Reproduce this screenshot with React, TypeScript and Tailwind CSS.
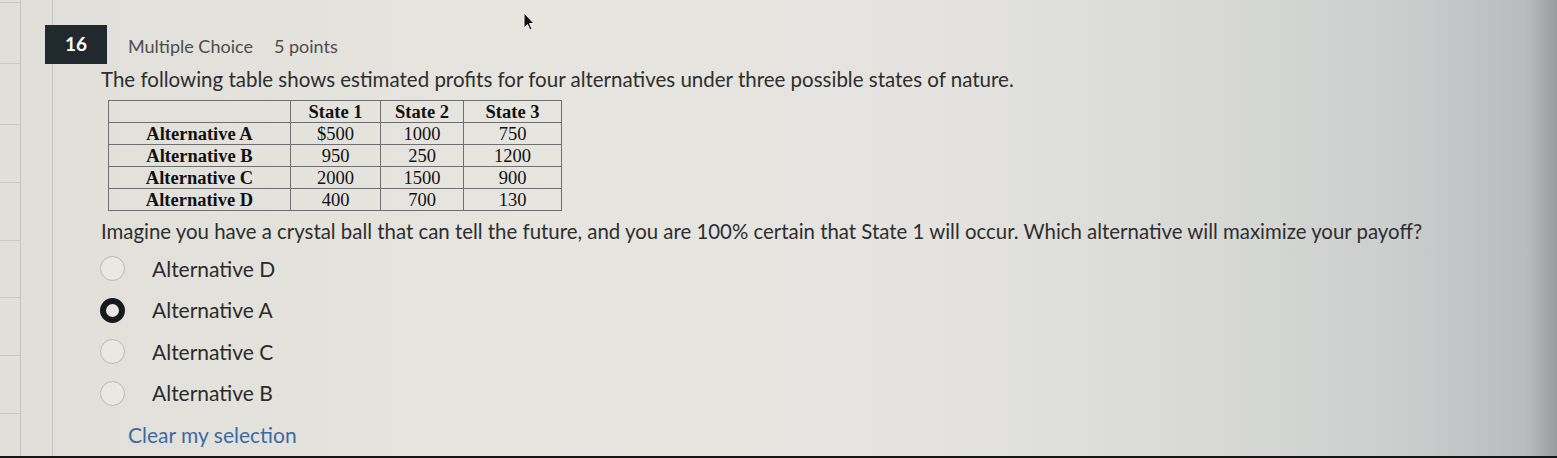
import React from "react";

const rows = [
  ["Alternative A", "$500", "1000", "750"],
  ["Alternative B", "950", "250", "1200"],
  ["Alternative C", "2000", "1500", "900"],
  ["Alternative D", "400", "700", "130"],
];

const options = [
  { label: "Alternative D", selected: false },
  { label: "Alternative A", selected: true },
  { label: "Alternative C", selected: false },
  { label: "Alternative B", selected: false },
];

export default function App() {
  return (
    <div
      className="relative w-[1557px] h-[458px] overflow-hidden flex flex-col bg-[linear-gradient(to_right,#e0dfda_0%,#e7e5e0_35%,#e4e3df_60%,#d8d9d7_78%,#cbcecd_90%,#b9bcbd_98%,#9a9d9e_100%)]"
      style={{ fontFamily: "Lato, 'Open Sans', sans-serif" }}
    >
      <div className="flex flex-1 min-h-0">
        {/* sidebar */}
        <div className="w-[53px] shrink-0 flex border-r border-[#c3c3c0]">
          <div className="w-[21px] border-r border-[#c3c3c0] flex flex-col">
            <div className="h-[3px] border-b border-[#c9c9c6]" />
            <div className="h-[61px] border-b border-[#c9c9c6]" />
            <div className="h-[61px] border-b border-[#c9c9c6]" />
            <div className="h-[58px] border-b border-[#c9c9c6]" />
            <div className="h-[58px] border-b border-[#c9c9c6]" />
            <div className="h-[57px] border-b border-[#c9c9c6]" />
            <div className="h-[58px] border-b border-[#c9c9c6]" />
            <div className="h-[58px] border-b border-[#c9c9c6]" />
          </div>
        </div>

        {/* main */}
        <div className="relative z-10 -ml-[8px] flex flex-col items-start">
          <div className="mt-[25px] flex items-center">
            <div className="w-[62px] h-[39px] bg-[#1f292e] flex items-center justify-center text-white font-bold text-[19px]">
              16
            </div>
            <div className="ml-[21px] mt-[3px] text-[18px] text-[#4d4d4d] flex gap-[21px]">
              <span>Multiple Choice</span>
              <span>5 points</span>
            </div>
          </div>

          <p className="ml-[56px] mt-[2px] text-[20.5px] leading-[26px] text-[#2e2e2e] whitespace-nowrap">
            The following table shows estimated profits for four alternatives under three possible states of nature.
          </p>

          <table
            className="ml-[63px] mt-[8px] w-[453px] table-fixed border-collapse text-[18.5px] leading-[20px] text-[#111]"
            style={{ fontFamily: "'Liberation Serif', 'Times New Roman', serif" }}
          >
            <colgroup>
              <col className="w-[182px]" />
              <col className="w-[90px]" />
              <col className="w-[83px]" />
              <col className="w-[98px]" />
            </colgroup>
            <thead>
              <tr className="h-[22px]">
                <th className="border border-[#6f6f6f] p-0" />
                <th className="border border-[#6f6f6f] p-0 font-bold">State 1</th>
                <th className="border border-[#6f6f6f] p-0 font-bold">State 2</th>
                <th className="border border-[#6f6f6f] p-0 font-bold">State 3</th>
              </tr>
            </thead>
            <tbody>
              {rows.map((r) => (
                <tr key={r[0]} className="h-[22px]">
                  <td className="border border-[#6f6f6f] p-0 text-center font-bold">{r[0]}</td>
                  <td className="border border-[#6f6f6f] p-0 text-center">{r[1]}</td>
                  <td className="border border-[#6f6f6f] p-0 text-center">{r[2]}</td>
                  <td className="border border-[#6f6f6f] p-0 text-center">{r[3]}</td>
                </tr>
              ))}
            </tbody>
          </table>

          <p className="ml-[56px] mt-[7px] text-[20.4px] leading-[26px] text-[#2e2e2e] whitespace-nowrap">
            Imagine you have a crystal ball that can tell the future, and you are 100% certain that State 1 will occur. Which alternative will maximize your payoff?
          </p>

          <div className="ml-[55px] mt-[12px] flex flex-col gap-[16.5px]">
            {options.map((o) => (
              <div key={o.label} className="flex items-center h-[25px]">
                <span
                  className={
                    o.selected
                      ? "w-[25px] h-[25px] rounded-full border-[6px] border-[#161a1c] bg-[#e8e7e3]"
                      : "w-[25px] h-[25px] rounded-full border-[1.5px] border-[#b9b9b6] bg-[#e9e8e4]"
                  }
                />
                <span className="ml-[27px] text-[21px] text-[#2b2b2b]">{o.label}</span>
              </div>
            ))}
          </div>

          <div className="ml-[83px] mt-[16px] text-[21px] leading-[26px] text-[#3c6aa3]">Clear my selection</div>
        </div>
      </div>

      <div className="h-[2px] bg-[#161616] shrink-0" />

      {/* mouse cursor */}
      <svg className="absolute left-[522px] top-[12px]" width="14" height="20" viewBox="0 0 14 20">
        <path d="M2 1 L2 16 L5.5 12.5 L8 18 L10 17 L7.5 11.5 L12 11.5 Z" fill="#111" stroke="#f2f2f2" strokeWidth="1" />
      </svg>
    </div>
  );
}
